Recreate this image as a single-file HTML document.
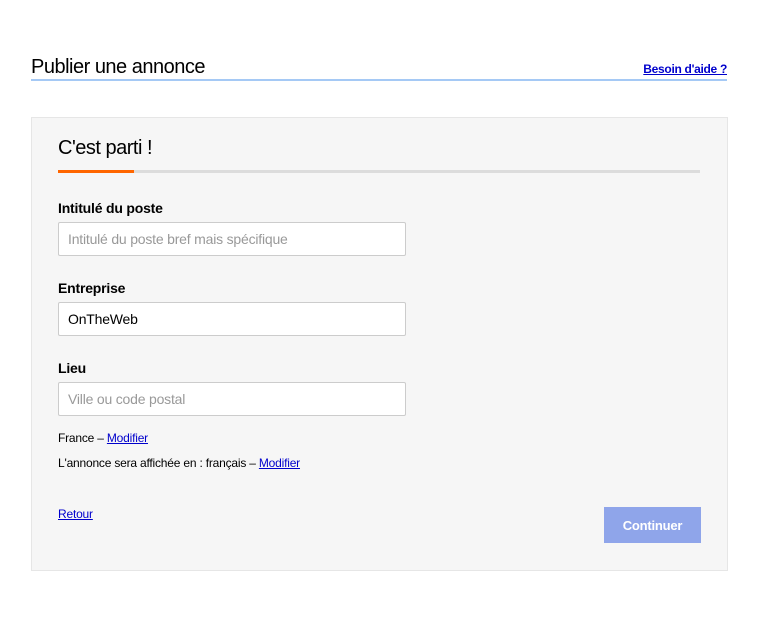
<!DOCTYPE html><html><head><meta charset="utf-8"><style>
body{margin:0;background:#fff;font-family:"Liberation Sans",Arial,sans-serif;color:#000;}
.abs{position:absolute}
a{color:#0000cc;text-decoration:underline}
.inp{position:absolute;left:58px;height:32px;border:1px solid #ccc;background:#fff;border-radius:2px;font-size:14px;line-height:32px;padding-left:9px;box-sizing:content-box;width:337px;letter-spacing:-0.2px}
.lbl{position:absolute;left:58px;font-size:14px;font-weight:bold;letter-spacing:-0.2px}
</style></head><body>
<div class="abs" style="left:31px;top:56px;font-size:20px;letter-spacing:-0.5px">Publier une annonce</div>
<a class="abs" href="#" style="right:41px;top:62px;font-size:12px;font-weight:bold;letter-spacing:-0.3px">Besoin d'aide ?</a>
<div class="abs" style="left:31px;top:79px;width:696px;height:2px;background:#a5c9f5"></div>
<div class="abs" style="left:31px;top:117px;width:695px;height:452px;background:#f6f6f6;border:1px solid #e6e6e6"></div>
<div class="abs" style="left:58px;top:137px;font-size:20px;letter-spacing:-0.5px">C'est parti !</div>
<div class="abs" style="left:58px;top:170px;width:642px;height:3px;background:#dcdcdc"></div>
<div class="abs" style="left:58px;top:170px;width:76px;height:3px;background:#ff6600"></div>
<div class="lbl" style="top:200px">Intitulé du poste</div>
<div class="inp" style="top:222px;color:#999">Intitulé du poste bref mais spécifique</div>
<div class="lbl" style="top:280px">Entreprise</div>
<div class="inp" style="top:302px;color:#000">OnTheWeb</div>
<div class="lbl" style="top:360px">Lieu</div>
<div class="inp" style="top:382px;color:#999">Ville ou code postal</div>
<div class="abs" style="left:58px;top:431px;font-size:12px;letter-spacing:-0.2px">France – <a href="#">Modifier</a></div>
<div class="abs" style="left:58px;top:456px;font-size:12px;letter-spacing:-0.2px">L'annonce sera affichée en : français – <a href="#">Modifier</a></div>
<a class="abs" href="#" style="left:58px;top:507px;font-size:12px;letter-spacing:-0.2px">Retour</a>
<div class="abs" style="left:604px;top:507px;width:97px;height:36px;background:#8fa5ea;color:#fff;font-size:13px;font-weight:bold;text-align:center;line-height:37px;letter-spacing:-0.2px">Continuer</div>
</body></html>
